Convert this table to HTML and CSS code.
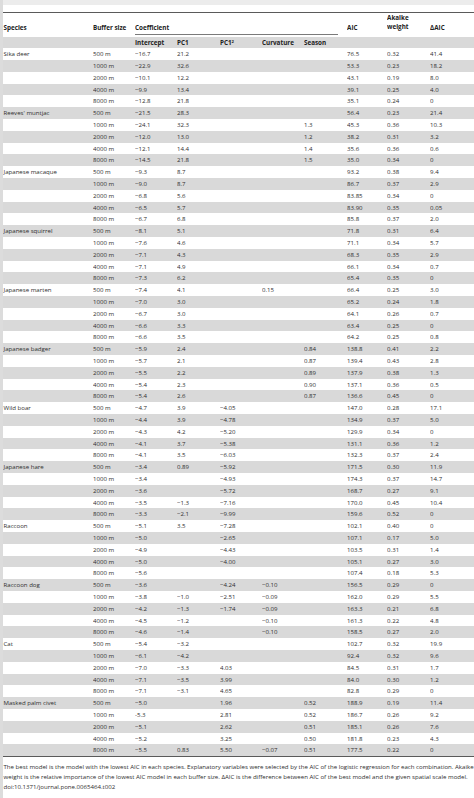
FILE: index.html
```html
<!DOCTYPE html>
<html>
<head>
<meta charset="utf-8">
<link rel="stylesheet" href="styles.css">
</head>
<body>
<div class="topband"></div>
<table class="data">
<colgroup>
<col class="c-sp"><col class="c-buf"><col class="c-int"><col class="c-pc1"><col class="c-pc2"><col class="c-curv"><col class="c-sea"><col class="c-aic"><col class="c-w"><col class="c-d">
</colgroup>
<thead>
<tr class="h1">
<th>Species</th><th>Buffer size</th><th colspan="5" class="coef"><div class="coef-line">Coefficient</div></th><th>AIC</th><th class="wcell"><div class="two">Akaike</div><div class="two">weight</div></th><th>ΔAIC</th>
</tr>
<tr class="h2">
<th></th><th></th><th>Intercept</th><th>PC1</th><th>PC1<sup>2</sup></th><th>Curvature</th><th>Season</th><th></th><th></th><th></th>
</tr>
</thead>
<tbody>
<tr><td>Sika deer</td><td>500 m</td><td>−16.7</td><td>21.2</td><td></td><td></td><td></td><td>76.5</td><td>0.32</td><td>41.4</td></tr>
<tr><td></td><td>1000 m</td><td>−22.9</td><td>32.6</td><td></td><td></td><td></td><td>53.3</td><td>0.23</td><td>18.2</td></tr>
<tr><td></td><td>2000 m</td><td>−10.1</td><td>12.2</td><td></td><td></td><td></td><td>43.1</td><td>0.19</td><td>8.0</td></tr>
<tr><td></td><td>4000 m</td><td>−9.9</td><td>13.4</td><td></td><td></td><td></td><td>39.1</td><td>0.25</td><td>4.0</td></tr>
<tr><td></td><td>8000 m</td><td>−12.8</td><td>21.8</td><td></td><td></td><td></td><td>35.1</td><td>0.24</td><td>0</td></tr>
<tr><td>Reeves' muntjac</td><td>500 m</td><td>−21.5</td><td>28.3</td><td></td><td></td><td></td><td>56.4</td><td>0.23</td><td>21.4</td></tr>
<tr><td></td><td>1000 m</td><td>−24.1</td><td>32.3</td><td></td><td></td><td>1.3</td><td>45.3</td><td>0.36</td><td>10.3</td></tr>
<tr><td></td><td>2000 m</td><td>−12.0</td><td>13.0</td><td></td><td></td><td>1.2</td><td>38.2</td><td>0.31</td><td>3.2</td></tr>
<tr><td></td><td>4000 m</td><td>−12.1</td><td>14.4</td><td></td><td></td><td>1.4</td><td>35.6</td><td>0.36</td><td>0.6</td></tr>
<tr><td></td><td>8000 m</td><td>−14.5</td><td>21.8</td><td></td><td></td><td>1.5</td><td>35.0</td><td>0.34</td><td>0</td></tr>
<tr><td>Japanese macaque</td><td>500 m</td><td>−9.3</td><td>8.7</td><td></td><td></td><td></td><td>93.2</td><td>0.38</td><td>9.4</td></tr>
<tr><td></td><td>1000 m</td><td>−9.0</td><td>8.7</td><td></td><td></td><td></td><td>86.7</td><td>0.37</td><td>2.9</td></tr>
<tr><td></td><td>2000 m</td><td>−6.8</td><td>5.6</td><td></td><td></td><td></td><td>83.85</td><td>0.34</td><td>0</td></tr>
<tr><td></td><td>4000 m</td><td>−6.5</td><td>5.7</td><td></td><td></td><td></td><td>83.90</td><td>0.35</td><td>0.05</td></tr>
<tr><td></td><td>8000 m</td><td>−6.7</td><td>6.8</td><td></td><td></td><td></td><td>85.8</td><td>0.37</td><td>2.0</td></tr>
<tr><td>Japanese squirrel</td><td>500 m</td><td>−8.1</td><td>5.1</td><td></td><td></td><td></td><td>71.8</td><td>0.31</td><td>6.4</td></tr>
<tr><td></td><td>1000 m</td><td>−7.6</td><td>4.6</td><td></td><td></td><td></td><td>71.1</td><td>0.34</td><td>5.7</td></tr>
<tr><td></td><td>2000 m</td><td>−7.1</td><td>4.3</td><td></td><td></td><td></td><td>68.3</td><td>0.35</td><td>2.9</td></tr>
<tr><td></td><td>4000 m</td><td>−7.1</td><td>4.9</td><td></td><td></td><td></td><td>66.1</td><td>0.34</td><td>0.7</td></tr>
<tr><td></td><td>8000 m</td><td>−7.3</td><td>6.2</td><td></td><td></td><td></td><td>65.4</td><td>0.35</td><td>0</td></tr>
<tr><td>Japanese marten</td><td>500 m</td><td>−7.4</td><td>4.1</td><td></td><td>0.15</td><td></td><td>66.4</td><td>0.25</td><td>3.0</td></tr>
<tr><td></td><td>1000 m</td><td>−7.0</td><td>3.0</td><td></td><td></td><td></td><td>65.2</td><td>0.24</td><td>1.8</td></tr>
<tr><td></td><td>2000 m</td><td>−6.7</td><td>3.0</td><td></td><td></td><td></td><td>64.1</td><td>0.26</td><td>0.7</td></tr>
<tr><td></td><td>4000 m</td><td>−6.6</td><td>3.3</td><td></td><td></td><td></td><td>63.4</td><td>0.25</td><td>0</td></tr>
<tr><td></td><td>8000 m</td><td>−6.6</td><td>3.5</td><td></td><td></td><td></td><td>64.2</td><td>0.25</td><td>0.8</td></tr>
<tr><td>Japanese badger</td><td>500 m</td><td>−5.9</td><td>2.4</td><td></td><td></td><td>0.84</td><td>138.8</td><td>0.41</td><td>2.2</td></tr>
<tr><td></td><td>1000 m</td><td>−5.7</td><td>2.1</td><td></td><td></td><td>0.87</td><td>139.4</td><td>0.43</td><td>2.8</td></tr>
<tr><td></td><td>2000 m</td><td>−5.5</td><td>2.2</td><td></td><td></td><td>0.89</td><td>137.9</td><td>0.38</td><td>1.3</td></tr>
<tr><td></td><td>4000 m</td><td>−5.4</td><td>2.3</td><td></td><td></td><td>0.90</td><td>137.1</td><td>0.36</td><td>0.5</td></tr>
<tr><td></td><td>8000 m</td><td>−5.4</td><td>2.6</td><td></td><td></td><td>0.87</td><td>136.6</td><td>0.45</td><td>0</td></tr>
<tr><td>Wild boar</td><td>500 m</td><td>−4.7</td><td>3.9</td><td>−4.05</td><td></td><td></td><td>147.0</td><td>0.28</td><td>17.1</td></tr>
<tr><td></td><td>1000 m</td><td>−4.4</td><td>3.9</td><td>−4.78</td><td></td><td></td><td>134.9</td><td>0.37</td><td>5.0</td></tr>
<tr><td></td><td>2000 m</td><td>−4.3</td><td>4.2</td><td>−5.20</td><td></td><td></td><td>129.9</td><td>0.34</td><td>0</td></tr>
<tr><td></td><td>4000 m</td><td>−4.1</td><td>3.7</td><td>−5.38</td><td></td><td></td><td>131.1</td><td>0.36</td><td>1.2</td></tr>
<tr><td></td><td>8000 m</td><td>−4.1</td><td>3.5</td><td>−6.03</td><td></td><td></td><td>132.3</td><td>0.37</td><td>2.4</td></tr>
<tr><td>Japanese hare</td><td>500 m</td><td>−3.4</td><td>0.89</td><td>−5.92</td><td></td><td></td><td>171.5</td><td>0.30</td><td>11.9</td></tr>
<tr><td></td><td>1000 m</td><td>−3.4</td><td></td><td>−4.93</td><td></td><td></td><td>174.3</td><td>0.37</td><td>14.7</td></tr>
<tr><td></td><td>2000 m</td><td>−3.6</td><td></td><td>−5.72</td><td></td><td></td><td>168.7</td><td>0.27</td><td>9.1</td></tr>
<tr><td></td><td>4000 m</td><td>−3.5</td><td>−1.3</td><td>−7.16</td><td></td><td></td><td>170.0</td><td>0.45</td><td>10.4</td></tr>
<tr><td></td><td>8000 m</td><td>−3.3</td><td>−2.1</td><td>−9.99</td><td></td><td></td><td>159.6</td><td>0.52</td><td>0</td></tr>
<tr><td>Raccoon</td><td>500 m</td><td>−5.1</td><td>3.5</td><td>−7.28</td><td></td><td></td><td>102.1</td><td>0.40</td><td>0</td></tr>
<tr><td></td><td>1000 m</td><td>−5.0</td><td></td><td>−2.65</td><td></td><td></td><td>107.1</td><td>0.17</td><td>5.0</td></tr>
<tr><td></td><td>2000 m</td><td>−4.9</td><td></td><td>−4.43</td><td></td><td></td><td>103.5</td><td>0.31</td><td>1.4</td></tr>
<tr><td></td><td>4000 m</td><td>−5.0</td><td></td><td>−4.00</td><td></td><td></td><td>105.1</td><td>0.27</td><td>3.0</td></tr>
<tr><td></td><td>8000 m</td><td>−5.6</td><td></td><td></td><td></td><td></td><td>107.4</td><td>0.18</td><td>5.3</td></tr>
<tr><td>Raccoon dog</td><td>500 m</td><td>−3.6</td><td></td><td>−4.24</td><td>−0.10</td><td></td><td>156.5</td><td>0.29</td><td>0</td></tr>
<tr><td></td><td>1000 m</td><td>−3.8</td><td>−1.0</td><td>−2.51</td><td>−0.09</td><td></td><td>162.0</td><td>0.29</td><td>5.5</td></tr>
<tr><td></td><td>2000 m</td><td>−4.2</td><td>−1.3</td><td>−1.74</td><td>−0.09</td><td></td><td>163.3</td><td>0.21</td><td>6.8</td></tr>
<tr><td></td><td>4000 m</td><td>−4.5</td><td>−1.2</td><td></td><td>−0.10</td><td></td><td>161.3</td><td>0.22</td><td>4.8</td></tr>
<tr><td></td><td>8000 m</td><td>−4.6</td><td>−1.4</td><td></td><td>−0.10</td><td></td><td>158.5</td><td>0.27</td><td>2.0</td></tr>
<tr><td>Cat</td><td>500 m</td><td>−5.4</td><td>−3.2</td><td></td><td></td><td></td><td>102.7</td><td>0.32</td><td>19.9</td></tr>
<tr><td></td><td>1000 m</td><td>−6.1</td><td>−4.2</td><td></td><td></td><td></td><td>92.4</td><td>0.32</td><td>9.6</td></tr>
<tr><td></td><td>2000 m</td><td>−7.0</td><td>−3.3</td><td>4.03</td><td></td><td></td><td>84.5</td><td>0.31</td><td>1.7</td></tr>
<tr><td></td><td>4000 m</td><td>−7.1</td><td>−3.5</td><td>3.99</td><td></td><td></td><td>84.0</td><td>0.30</td><td>1.2</td></tr>
<tr><td></td><td>8000 m</td><td>−7.1</td><td>−3.1</td><td>4.65</td><td></td><td></td><td>82.8</td><td>0.29</td><td>0</td></tr>
<tr><td>Masked palm civet</td><td>500 m</td><td>−5.0</td><td></td><td>1.96</td><td></td><td>0.52</td><td>188.9</td><td>0.19</td><td>11.4</td></tr>
<tr><td></td><td>1000 m</td><td>-5.3</td><td></td><td>2.81</td><td></td><td>0.52</td><td>186.7</td><td>0.26</td><td>9.2</td></tr>
<tr><td></td><td>2000 m</td><td>−5.1</td><td></td><td>2.62</td><td></td><td>0.51</td><td>185.1</td><td>0.26</td><td>7.6</td></tr>
<tr><td></td><td>4000 m</td><td>−5.2</td><td></td><td>3.25</td><td></td><td>0.50</td><td>181.8</td><td>0.23</td><td>4.3</td></tr>
<tr><td></td><td>8000 m</td><td>−5.5</td><td>0.83</td><td>5.50</td><td>−0.07</td><td>0.51</td><td>177.5</td><td>0.22</td><td>0</td></tr>
</tbody>
</table>
<div class="foot">
<div class="fl">The best model is the model with the lowest AIC in each species. Explanatory variables were selected by the AIC of the logistic regression for each combination. Akaike</div>
<div class="fl">weight is the relative importance of the lowest AIC model in each buffer size. ΔAIC is the difference between AIC of the best model and the given spatial scale model.</div>
<div class="fl">doi:10.1371/journal.pone.0065464.t002</div>
</div>
</body>
</html>
```
FILE: styles.css
```css
html, body {
  margin: 0;
  padding: 0;
}
body {
  width: 471px;
  height: 798px;
  overflow: hidden;
  background: #fff;
  border-left: 3px solid #dcdcdc;
  font-family: "Open Sans", "DejaVu Sans", sans-serif;
  color: #2e2e2e;
}
.topband {
  height: 5px;
  background: #ececec;
  margin-left: -3px;
}
.data {
  margin-top: 7px;
  width: 471px;
  table-layout: fixed;
  border-collapse: collapse;
  border-top: 1px solid #5a5a5a;
  border-bottom: 1px solid #5a5a5a;
  font-size: 6.1px;
}
.c-sp { width: 90px; }
.c-buf { width: 42px; }
.c-int { width: 42px; }
.c-pc1 { width: 43px; }
.c-pc2 { width: 42px; }
.c-curv { width: 42px; }
.c-sea { width: 43px; }
.c-aic { width: 40px; }
.c-w { width: 43px; }
.c-d { width: 44px; }

th, td {
  padding: 0;
  text-align: left;
  white-space: nowrap;
  overflow: hidden;
}
td:first-child, th:first-child {
  padding-left: 0.5px;
}
th {
  font-weight: bold;
  color: #222;
  font-size: 6.3px;
}
.h1 th {
  height: 24px;
  vertical-align: bottom;
  padding-bottom: 5px;
  line-height: 8px;
  box-sizing: border-box;
}
.h1 th.wcell {
  padding-bottom: 4.6px;
}
.h1 .two {
  height: 8.8px;
  line-height: 8.8px;
}
.h1 th.coef {
  padding-bottom: 2px;
}
.coef-line {
  border-bottom: 1px solid #7a7a7a;
  margin-left: -2px;
  padding-left: 2px;
  margin-right: 9px;
  padding-bottom: 2px;
}
.h2 {
  background: #d9d9d9;
}
.h2 th {
  height: 11.8px;
  line-height: 11.8px;
}
sup {
  font-size: 4.2px;
  vertical-align: 2.5px;
  line-height: 0;
}
tbody td {
  height: 11.8px;
  line-height: 11.8px;
}
tbody tr:nth-child(even) {
  background: #d9d9d9;
}
.foot {
  margin-top: 5px;
  font-size: 6.1px;
  line-height: 10px;
  color: #2e2e2e;
  padding-left: 0.5px;
}
.fl {
  white-space: nowrap;
}
```
